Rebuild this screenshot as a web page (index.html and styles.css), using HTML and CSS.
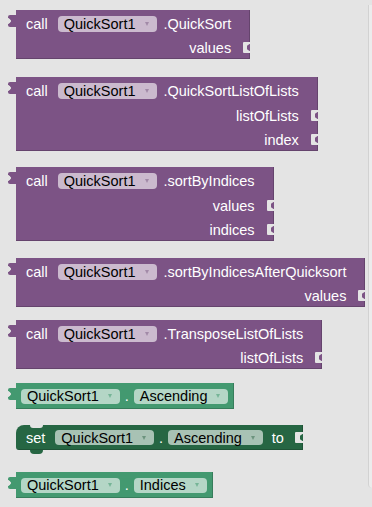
FILE: index.html
```html
<!DOCTYPE html>
<html lang="en">
<head>
  <meta charset="UTF-8" />
  <title>QuickSort blocks</title>
  <link rel="stylesheet" href="styles.css">
</head>
<body>

  <div class="workspace">

    <div class="block call">
      <div class="row head">
        <span class="kw">call</span>
        <span class="pill">QuickSort1<i class="arrow"></i></span>
        <span class="kw">.QuickSort</span>
      </div>
      <div class="row input last"><span class="kw">values</span><span class="socket"></span></div>
    </div>

    <div class="block call gap-18">
      <div class="row head">
        <span class="kw">call</span>
        <span class="pill">QuickSort1<i class="arrow"></i></span>
        <span class="kw">.QuickSortListOfLists</span>
      </div>
      <div class="row input"><span class="kw">listOfLists</span><span class="socket"></span></div>
      <div class="row input last"><span class="kw">index</span><span class="socket"></span></div>
    </div>

    <div class="block call gap-16">
      <div class="row head">
        <span class="kw">call</span>
        <span class="pill">QuickSort1<i class="arrow"></i></span>
        <span class="kw">.sortByIndices</span>
      </div>
      <div class="row input"><span class="kw">values</span><span class="socket"></span></div>
      <div class="row input last"><span class="kw">indices</span><span class="socket"></span></div>
    </div>

    <div class="block call gap-17">
      <div class="row head">
        <span class="kw">call</span>
        <span class="pill">QuickSort1<i class="arrow"></i></span>
        <span class="kw">.sortByIndicesAfterQuicksort</span>
      </div>
      <div class="row input last"><span class="kw">values</span><span class="socket"></span></div>
    </div>

    <div class="block call gap-13">
      <div class="row head">
        <span class="kw">call</span>
        <span class="pill">QuickSort1<i class="arrow"></i></span>
        <span class="kw">.TransposeListOfLists</span>
      </div>
      <div class="row input last"><span class="kw">listOfLists</span><span class="socket"></span></div>
    </div>

    <div class="block getter gap-14">
      <span class="pill">QuickSort1<i class="arrow"></i></span>
      <span class="kw dot">.</span>
      <span class="pill">Ascending<i class="arrow"></i></span>
    </div>

    <div class="block setter gap-16">
      <span class="kw">set</span>
      <span class="pill component">QuickSort1<i class="arrow"></i></span>
      <span class="kw dot">.</span>
      <span class="pill">Ascending<i class="arrow"></i></span>
      <span class="kw to">to</span>
      <span class="socket"></span>
    </div>

    <div class="block getter gap-22">
      <span class="pill">QuickSort1<i class="arrow"></i></span>
      <span class="kw dot">.</span>
      <span class="pill">Indices<i class="arrow"></i></span>
    </div>

  </div>

  <div class="scroll-edge"></div>

</body>
</html>
```

FILE: styles.css
```css
/* Reset */
* {
  margin: 0; padding: 0; box-sizing: border-box;
}
html, body {
  height: 100%;
  overflow: hidden;
  background: #e4e4e4;
  font-family: 'Liberation Sans', Arial, sans-serif;
  font-size: 14.5px;
  position: relative;
}

/* Area de trabajo */
.workspace {
  display: flex;
  flex-direction: column;
  align-items: flex-start;
  padding: 10px 0 0 16px;
}

.gap-13 { margin-top: 13px; }
.gap-14 { margin-top: 14px; }
.gap-16 { margin-top: 16px; }
.gap-17 { margin-top: 17px; }
.gap-18 { margin-top: 18px; }
.gap-22 { margin-top: 22px; }

/* Bloque base */
.block {
  --c: #7c5385;
  position: relative;
  background: var(--c);
  color: #fff;
  box-shadow: inset -1px -1px 0 rgba(0,0,0,0.18);
}

/* Conector de salida (izquierda) */
.call::before, .getter::before {
  content: "";
  position: absolute;
  left: -8px;
  top: 5px;
  width: 8px;
  height: 12px;
  background: radial-gradient(circle at 0 50%, #e4e4e4 2.5px, transparent 3px), var(--c);
  border-radius: 2px 0 0 2px;
}

.kw {
  line-height: 16px;
  white-space: nowrap;
}

/* Bloques "call" */
.call {
  display: flex;
  flex-direction: column;
  padding: 1px 19px 0 10px;
}
.row {
  display: flex;
  align-items: center;
  height: 25px;
}
.row.last {
  height: 23px;
}
.head .pill {
  margin: 0 7px 0 10px;
}
.input {
  justify-content: flex-end;
}
.input .socket {
  margin: 0 -19px 0 12px;
}

/* Hueco de entrada (derecha) */
.socket {
  width: 7px;
  height: 11px;
  background: radial-gradient(circle at 100% 50%, var(--c) 3px, transparent 3.5px), #e4e4e4;
  border-radius: 1px 0 0 1px;
}

/* Desplegables */
.pill {
  display: inline-flex;
  align-items: center;
  height: 16px;
  line-height: 16px;
  padding: 0 8px 0 6px;
  border-radius: 4px;
  background: #cbbace;
  color: #000;
  white-space: nowrap;
}
.arrow {
  width: 0;
  height: 0;
  margin-left: 9px;
  border-left: 2.5px solid transparent;
  border-right: 2.5px solid transparent;
  border-top: 4px solid #a28aa8;
}

/* Getter verde */
.getter {
  --c: #439970;
  display: flex;
  align-items: center;
  gap: 5px;
  height: 26px;
  padding: 0 6px 0 5px;
}
.getter .pill {
  height: 15px;
  background: #b4d6c6;
}
.getter .arrow {
  border-top-color: #76b597;
}

/* Setter verde oscuro */
.setter {
  --c: #266643;
  display: flex;
  align-items: center;
  height: 25px;
  padding-left: 10px;
  border-radius: 8px 0 0 3px;
}
.setter::before {
  content: "";
  position: absolute;
  top: 0;
  left: 14px;
  width: 13px;
  height: 3px;
  background: #e4e4e4;
  border-radius: 0 0 6px 6px;
}
.setter::after {
  content: "";
  position: absolute;
  bottom: -4px;
  left: 14px;
  width: 13px;
  height: 4px;
  background: var(--c);
  border-radius: 0 0 6px 6px;
}
.setter .pill {
  height: 15px;
  background: #a8c2b4;
}
.setter .arrow {
  border-top-color: #6c947e;
}
.setter .component {
  margin-left: 10px;
}
.setter .dot {
  margin: 0 5px;
}
.setter .to {
  margin: 0 11px 0 9px;
}
.setter .socket {
  width: 8px;
}

/* Borde derecho del panel */
.scroll-edge {
  position: absolute;
  top: 5px;
  right: 0;
  bottom: 19px;
  width: 4px;
  background: #ececec;
  border-left: 1px solid #d2d2d2;
  border-radius: 0 0 0 4px;
}
```
